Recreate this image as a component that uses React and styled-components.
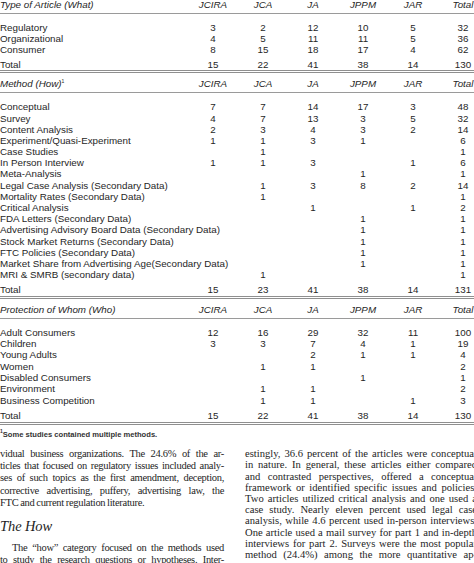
import React from "react";
import styled, { createGlobalStyle } from "styled-components";

const Global = createGlobalStyle`
  html, body { margin: 0; padding: 0; background: #fff; }
  body { width: 474px; height: 563px; overflow: hidden; }
`;

const Page = styled.div`
  width: 474px;
  height: 563px;
  overflow: hidden;
  background: #fff;
  color: #262626;
`;

const Table = styled.div`
  margin-top: -6px;
  width: 500px;
  font-family: "Liberation Sans", Arial, sans-serif;
  font-size: 9.8px;
`;

const Row = styled.div`
  display: grid;
  grid-template-columns: 188px repeat(6, 50px);
  align-items: center;
`;

const HeadRow = styled(Row)`
  font-style: italic;
  line-height: 12px;
  padding: 5px 0 2px;
  border-bottom: 1.5px solid #9a9a9a;
`;

const Body = styled.div`
  padding-top: 8px;
`;

const DataRow = styled(Row)`
  height: ${(p) => p.$h}px;
  line-height: ${(p) => p.$h}px;
`;

const TotalRow = styled(Row)`
  height: ${(p) => p.$h}px;
  line-height: ${(p) => p.$h}px;
  margin-top: ${(p) => p.$gap}px;
  border-bottom: 3px double #8f8f8f;
  box-sizing: content-box;
`;

const Label = styled.div`
  white-space: nowrap;
`;

const Num = styled.div`
  text-align: center;
  white-space: nowrap;
`;

const Sup = styled.sup`
  font-size: 5px;
  vertical-align: 4px;
  line-height: 0;
  font-style: normal;
`;

const Footnote = styled.div`
  margin-top: 5px;
  font-family: "Liberation Sans", Arial, sans-serif;
  font-size: 7.6px;
  font-weight: bold;
  line-height: 10px;
  color: #333;
  white-space: nowrap;
`;

const Columns = styled.div`
  margin-top: 8px;
  display: grid;
  grid-template-columns: 224px 232px;
  column-gap: 21px;
  font-family: "Liberation Serif", "Times New Roman", serif;
  color: #1e1e1e;
`;

const Col = styled.div`
  font-size: ${(p) => p.$size}px;
  line-height: ${(p) => p.$lh}px;
  letter-spacing: ${(p) => p.$ls || 0}px;
  word-spacing: ${(p) => p.$ws || 0}px;
  padding-top: ${(p) => p.$pt || 0}px;
`;

const Line = styled.div`
  text-align: justify;
  text-align-last: ${(p) => (p.$last ? "left" : "justify")};
  text-indent: ${(p) => (p.$indent ? "12px" : "0")};
`;

const Heading = styled.div`
  font-style: italic;
  font-size: 14.5px;
  line-height: 16px;
  letter-spacing: 0;
  margin: 8px 0 8px;
`;

const heads = ["JCIRA", "JCA", "JA", "JPPM", "JAR", "Total"];

const sections = [
  {
    title: "Type of Article (What)",
    h: 11.2,
    gap: 3.6,
    rows: [
      ["Regulatory", "3", "2", "12", "10", "5", "32"],
      ["Organizational", "4", "5", "11", "11", "5", "36"],
      ["Consumer", "8", "15", "18", "17", "4", "62"],
    ],
    total: ["15", "22", "41", "38", "14", "130"],
  },
  {
    title: "Method (How)",
    sup: "1",
    h: 11.2,
    gap: 4,
    rows: [
      ["Conceptual", "7", "7", "14", "17", "3", "48"],
      ["Survey", "4", "7", "13", "3", "5", "32"],
      ["Content Analysis", "2", "3", "4", "3", "2", "14"],
      ["Experiment/Quasi-Experiment", "1", "1", "3", "1", "", "6"],
      ["Case Studies", "", "1", "", "", "", "1"],
      ["In Person Interview", "1", "1", "3", "", "1", "6"],
      ["Meta-Analysis", "", "", "", "1", "", "1"],
      ["Legal Case Analysis (Secondary Data)", "", "1", "3", "8", "2", "14"],
      ["Mortality Rates (Secondary Data)", "", "1", "", "", "", "1"],
      ["Critical Analysis", "", "", "1", "", "1", "2"],
      ["FDA Letters (Secondary Data)", "", "", "", "1", "", "1"],
      ["Advertising Advisory Board Data (Secondary Data)", "", "", "", "1", "", "1"],
      ["Stock Market Returns (Secondary Data)", "", "", "", "1", "", "1"],
      ["FTC Policies (Secondary Data)", "", "", "", "1", "", "1"],
      ["Market Share from Advertising Age(Secondary Data)", "", "", "", "1", "", "1"],
      ["MRI & SMRB (secondary data)", "", "1", "", "", "", "1"],
    ],
    total: ["15", "23", "41", "38", "14", "131"],
  },
  {
    title: "Protection of Whom (Who)",
    h: 11.4,
    gap: 4,
    rows: [
      ["Adult Consumers", "12", "16", "29", "32", "11", "100"],
      ["Children", "3", "3", "7", "4", "1", "19"],
      ["Young Adults", "", "", "2", "1", "1", "4"],
      ["Women", "", "1", "1", "", "", "2"],
      ["Disabled Consumers", "", "", "", "1", "", "1"],
      ["Environment", "", "1", "1", "", "", "2"],
      ["Business Competition", "", "1", "1", "", "1", "3"],
    ],
    total: ["15", "22", "41", "38", "14", "130"],
  },
];

const leftLines = [
  "vidual business organizations. The 24.6% of the ar-",
  "ticles that focused on regulatory issues included analy-",
  "ses of such topics as the first amendment, deception,",
  "corrective advertising, puffery, advertising law, the",
];

const rightLines = [
  "estingly, 36.6 percent of the articles were conceptual",
  "in nature. In general, these articles either compared",
  "and contrasted perspectives, offered a conceptual",
  "framework or identified specific issues and policies.",
  "Two articles utilized critical analysis and one used a",
  "case study. Nearly eleven percent used legal case",
  "analysis, while 4.6 percent used in-person interviews.",
  "One article used a mail survey for part 1 and in-depth",
  "interviews for part 2. Surveys were the most popular",
  "method (24.4%) among the more quantitative ap-",
];

export default function App() {
  return (
    <Page>
      <Global />
      <Table>
        {sections.map((s) => (
          <section key={s.title}>
            <HeadRow>
              <Label>
                {s.title}
                {s.sup && <Sup>{s.sup}</Sup>}
              </Label>
              {heads.map((h) => (
                <Num key={h}>{h}</Num>
              ))}
            </HeadRow>
            <Body>
              {s.rows.map((r) => (
                <DataRow key={r[0]} $h={s.h}>
                  <Label>{r[0]}</Label>
                  {r.slice(1).map((v, i) => (
                    <Num key={i}>{v}</Num>
                  ))}
                </DataRow>
              ))}
              <TotalRow $h={s.h} $gap={s.gap}>
                <Label>Total</Label>
                {s.total.map((v, i) => (
                  <Num key={i}>{v}</Num>
                ))}
              </TotalRow>
            </Body>
          </section>
        ))}
      </Table>
      <Footnote>
        <Sup>1</Sup>Some studies contained multiple methods.
      </Footnote>
      <Columns>
        <Col $size={10.5} $lh={12.4} $ls={-0.3} $ws={-0.5}>
          {leftLines.map((l) => (
            <Line key={l}>{l}</Line>
          ))}
          <Line $last>FTC and current regulation literature.</Line>
          <Heading>The How</Heading>
          <Line $indent>The “how” category focused on the methods used</Line>
          <Line>to study the research questions or hypotheses. Inter-</Line>
        </Col>
        <Col $size={10.6} $lh={11.2} $pt={0.6}>
          {rightLines.map((l) => (
            <Line key={l}>{l}</Line>
          ))}
        </Col>
      </Columns>
    </Page>
  );
}
